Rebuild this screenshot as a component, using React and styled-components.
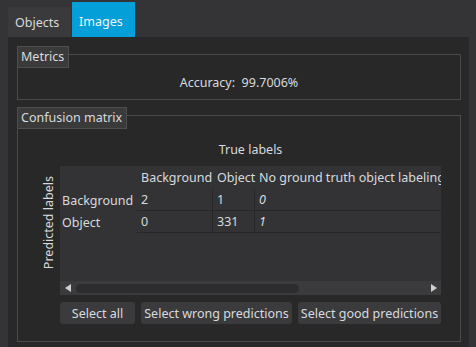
import React from 'react';
import styled, { createGlobalStyle } from 'styled-components';

const GlobalStyle = createGlobalStyle`
  html, body {
    margin: 0;
    padding: 0;
    background: #343437;
  }
  * {
    box-sizing: border-box;
  }
`;

const columns = ['Background', 'Object', 'No ground truth object labeling'];
const rows = [
  { label: 'Background', values: ['2', '1', '0'] },
  { label: 'Object', values: ['0', '331', '1'] },
];
const widths = [76, 42, 200];

const App = () => {
  return (
    <>
      <GlobalStyle />
      <Window>
        <TabBar>
          <Tab>Objects</Tab>
          <Tab active>Images</Tab>
        </TabBar>
        <Panel>
          <Group>
            <GroupTitle>Metrics</GroupTitle>
            <AccuracyRow>Accuracy:&nbsp; 99.7006%</AccuracyRow>
          </Group>
          <Group grow>
            <GroupTitle>Confusion matrix</GroupTitle>
            <MatrixArea>
              <SideLabelColumn>
                <SideLabel>Predicted labels</SideLabel>
              </SideLabelColumn>
              <MatrixColumn>
                <TopLabel>True labels</TopLabel>
                <Table>
                  <TableBody>
                    <HeaderRow>
                      <RowHead />
                      {columns.map((c, i) => (
                        <HeaderCell key={c} style={{ width: widths[i] }}>
                          {c}
                        </HeaderCell>
                      ))}
                    </HeaderRow>
                    {rows.map((r) => (
                      <Row key={r.label}>
                        <RowHead>{r.label}</RowHead>
                        {r.values.map((v, i) => (
                          <Cell key={i} italic={i === 2} style={{ width: widths[i] }}>
                            {v}
                          </Cell>
                        ))}
                      </Row>
                    ))}
                  </TableBody>
                  <ScrollBar>
                    <Arrow>
                      <svg width="7" height="8" viewBox="0 0 7 8">
                        <path d="M6 0 L0 4 L6 8 Z" fill="#d0d0d0" />
                      </svg>
                    </Arrow>
                    <ScrollTrack>
                      <ScrollHandle />
                    </ScrollTrack>
                    <Arrow>
                      <svg width="7" height="8" viewBox="0 0 7 8">
                        <path d="M1 0 L7 4 L1 8 Z" fill="#d0d0d0" />
                      </svg>
                    </Arrow>
                  </ScrollBar>
                </Table>
                <Buttons>
                  <Button style={{ width: 75 }}>Select all</Button>
                  <Button style={{ width: 151 }}>Select wrong predictions</Button>
                  <Button style={{ width: 143 }}>Select good predictions</Button>
                </Buttons>
              </MatrixColumn>
            </MatrixArea>
          </Group>
        </Panel>
      </Window>
    </>
  );
};

const Window = styled.div`
  width: 476px;
  height: 347px;
  background: #343437;
  font-family: 'Noto Sans', 'Open Sans', sans-serif;
  font-size: 12.5px;
  color: #d8dade;
  display: flex;
  flex-direction: column;
  overflow: hidden;
`;

const TabBar = styled.div`
  height: 37px;
  display: flex;
  align-items: flex-end;
  padding-left: 8px;
  gap: 1px;
`;

const Tab = styled.div`
  width: 63px;
  height: ${(p) => (p.active ? '35px' : '30px')};
  background: ${(p) => (p.active ? '#049fd9' : '#3a3a3d')};
  color: ${(p) => (p.active ? '#f0f4f8' : '#d8dade')};
  display: flex;
  align-items: center;
  padding-left: 7px;
  padding-top: ${(p) => (p.active ? '4px' : '0')};
`;

const Panel = styled.div`
  flex: 1;
  margin: 0 7px 0 8px;
  background: #282828;
  padding: 9px 8px 5px 9px;
  display: flex;
  flex-direction: column;
  gap: 7px;
`;

const Group = styled.div`
  border: 1px solid #4a4a4c;
  margin-top: 8px;
  display: flex;
  flex-direction: column;
  ${(p) => (p.grow ? 'flex: 1;' : 'height: 46px;')}
`;

const GroupTitle = styled.div`
  align-self: flex-start;
  margin: -9px 0 0 -1px;
  height: 22px;
  padding: 0 4px 0 3px;
  background: #3a3a3a;
  border: 1px solid #4e4e50;
  display: flex;
  align-items: center;
  line-height: 1;
`;

const AccuracyRow = styled.div`
  flex: 1;
  display: flex;
  align-items: center;
  justify-content: center;
  padding-bottom: 2px;
`;

const MatrixArea = styled.div`
  flex: 1;
  display: flex;
  padding: 0 19px 17px 18px;
`;

const SideLabelColumn = styled.div`
  width: 24px;
  display: flex;
  align-items: center;
  justify-content: center;
  padding-top: 40px;
  padding-bottom: 48px;
`;

const SideLabel = styled.div`
  writing-mode: vertical-rl;
  transform: rotate(180deg);
  white-space: nowrap;
`;

const MatrixColumn = styled.div`
  flex: 1;
  min-width: 0;
  display: flex;
  flex-direction: column;
`;

const TopLabel = styled.div`
  height: 37px;
  display: flex;
  align-items: center;
  justify-content: center;
  padding-top: 4px;
`;

const Table = styled.div`
  height: 129px;
  background: #333335;
  display: flex;
  flex-direction: column;
  overflow: hidden;
`;

const TableBody = styled.div`
  flex: 1;
  overflow: hidden;
`;

const HeaderRow = styled.div`
  display: flex;
  height: 23px;
  align-items: center;
  white-space: nowrap;
`;

const Row = styled.div`
  display: flex;
  height: 22px;
  white-space: nowrap;
`;

const RowHead = styled.div`
  width: 77px;
  flex-shrink: 0;
  padding-left: 2px;
  display: flex;
  align-items: center;
`;

const HeaderCell = styled.div`
  flex-shrink: 0;
  padding-left: 4px;
`;

const Cell = styled.div`
  flex-shrink: 0;
  padding-left: 4px;
  display: flex;
  align-items: center;
  border-right: 1px solid #27272a;
  border-bottom: 1px solid #27272a;
  font-style: ${(p) => (p.italic ? 'italic' : 'normal')};
`;

const ScrollBar = styled.div`
  height: 14px;
  background: #3b3b3e;
  display: flex;
  align-items: center;
`;

const Arrow = styled.div`
  width: 16px;
  display: flex;
  align-items: center;
  justify-content: center;
`;

const ScrollTrack = styled.div`
  flex: 1;
  height: 100%;
  display: flex;
  align-items: center;
`;

const ScrollHandle = styled.div`
  width: 223px;
  height: 9px;
  border-radius: 5px;
  background: #2d2d30;
`;

const Buttons = styled.div`
  display: flex;
  gap: 6px;
  margin-top: 7px;
`;

const Button = styled.div`
  height: 22px;
  border-radius: 3px;
  background: #3b3b3e;
  display: flex;
  align-items: center;
  justify-content: center;
  white-space: nowrap;
`;

export default App;
